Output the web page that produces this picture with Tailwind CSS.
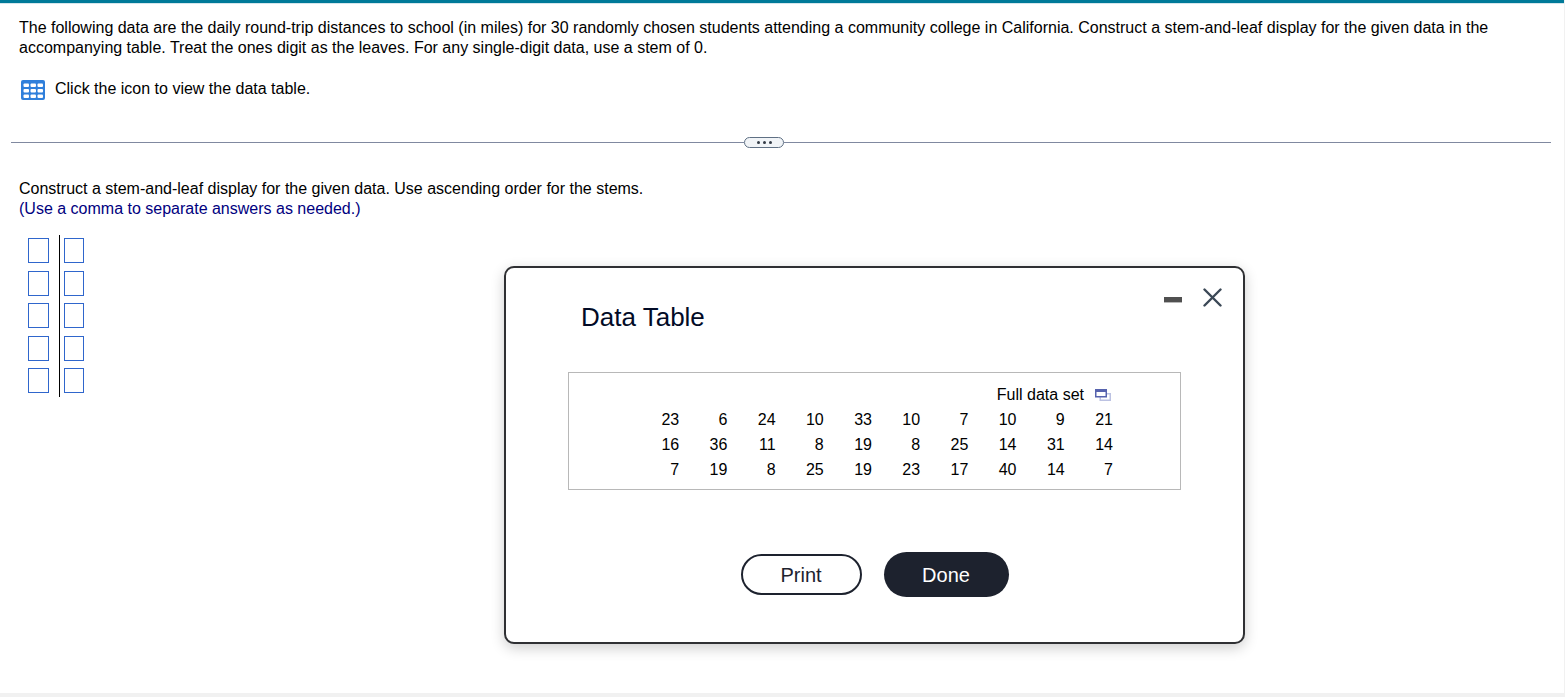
<!DOCTYPE html>
<html lang="en">
<head>
    <meta charset="UTF-8">
    <meta name="viewport" content="width=device-width, initial-scale=1.0">
    <title>Stem-and-Leaf Display</title>
    <script src="https://cdn.jsdelivr.net/npm/@tailwindcss/browser@4"></script>
</head>
<body class="relative min-h-screen flex flex-col bg-white border-r border-b-4 border-[#f1f1f1] text-base leading-5 text-black font-['Liberation_Sans',Arial,sans-serif]">
    <!-- Top bar -->
    <div class="h-1 bg-[#007a99] border-b border-[#d5e6ec]"></div>

    <main class="flex-1 pt-3.5">
        <!-- Problem statement -->
        <section class="px-[19px]">
            <p>The following data are the daily round-trip distances to school (in miles) for 30 randomly chosen students attending a community college in California. Construct a stem-and-leaf display for the given data in the accompanying table. Treat the ones digit as the leaves. For any single-digit data, use a stem of 0.</p>
            <div class="mt-[21px] pl-0.5 flex items-start gap-2.5">
                <button type="button" aria-label="View the data table" class="mt-px">
                    <svg class="block w-6 h-5" viewBox="0 0 24 20">
                        <rect width="24" height="20" rx="2" fill="#2f7fdb"/>
                        <g fill="#fff">
                            <rect x="2.5" y="3.5" width="5.5" height="3.5" rx="1"/>
                            <rect x="9.5" y="3.5" width="5.5" height="3.5" rx="1"/>
                            <rect x="16.5" y="3.5" width="5.5" height="3.5" rx="1"/>
                            <rect x="2.5" y="9" width="5.5" height="3.5" rx="1"/>
                            <rect x="9.5" y="9" width="5.5" height="3.5" rx="1"/>
                            <rect x="16.5" y="9" width="5.5" height="3.5" rx="1"/>
                            <rect x="2.5" y="14.5" width="5.5" height="3.5" rx="1"/>
                            <rect x="9.5" y="14.5" width="5.5" height="3.5" rx="1"/>
                            <rect x="16.5" y="14.5" width="5.5" height="3.5" rx="1"/>
                        </g>
                    </svg>
                </button>
                <p>Click the icon to view the data table.</p>
            </div>
        </section>

        <!-- Divider with expand handle -->
        <div class="mt-[37px] ml-[11px] mr-[13px] flex items-center">
            <div class="h-px w-[733px] bg-[#8089a0]"></div>
            <button type="button" aria-label="Expand" class="w-10 h-[11px] flex items-center justify-center gap-[3px] rounded-full border border-[#5f7084] bg-[#f1f4f7]">
                <span class="size-[3px] rounded-full bg-[#333b46]"></span>
                <span class="size-[3px] rounded-full bg-[#333b46]"></span>
                <span class="size-[3px] rounded-full bg-[#333b46]"></span>
            </button>
            <div class="h-px flex-1 bg-[#8089a0]"></div>
        </div>

        <!-- Answer area -->
        <section class="mt-[31px] px-[19px]">
            <p>Construct a stem-and-leaf display for the given data. Use ascending order for the stems.</p>
            <p class="text-[#000080]">(Use a comma to separate answers as needed.)</p>
            <div class="mt-4 ml-[9px] flex h-[162px]">
                <div class="flex flex-col justify-between pt-[3px] pb-1 pr-2.5">
                    <input type="text" aria-label="Stem 1" class="w-[21px] h-[25px] border border-[#2f66cc]">
                    <input type="text" aria-label="Stem 2" class="w-[21px] h-[25px] border border-[#2f66cc]">
                    <input type="text" aria-label="Stem 3" class="w-[21px] h-[25px] border border-[#2f66cc]">
                    <input type="text" aria-label="Stem 4" class="w-[21px] h-[25px] border border-[#2f66cc]">
                    <input type="text" aria-label="Stem 5" class="w-[21px] h-[25px] border border-[#2f66cc]">
                </div>
                <div class="flex flex-col justify-between pt-[3px] pb-1 pl-1 border-l border-black">
                    <input type="text" aria-label="Leaves 1" class="w-5 h-[25px] border border-[#2f66cc]">
                    <input type="text" aria-label="Leaves 2" class="w-5 h-[25px] border border-[#2f66cc]">
                    <input type="text" aria-label="Leaves 3" class="w-5 h-[25px] border border-[#2f66cc]">
                    <input type="text" aria-label="Leaves 4" class="w-5 h-[25px] border border-[#2f66cc]">
                    <input type="text" aria-label="Leaves 5" class="w-5 h-[25px] border border-[#2f66cc]">
                </div>
            </div>
        </section>
    </main>

    <!-- Data table dialog -->
    <div role="dialog" aria-labelledby="dialog-title" class="absolute left-[504px] top-[266px] w-[741px] px-[62px] pb-[45px] bg-white border-2 border-[#2f3033] rounded-[10px] shadow-[0_4px_14px_rgba(0,0,0,0.2)]">
        <div class="flex justify-between pl-[13px] -mr-[41px]">
            <h2 id="dialog-title" class="mt-[34px] text-[26px] leading-[30px] text-[#020b26]">Data Table</h2>
            <div class="mt-5 flex items-start gap-[21px]">
                <button type="button" aria-label="Minimize" class="pt-[9px]">
                    <span class="block w-[18px] h-1.5 bg-[#505050] border-b border-[#b8b8b8]"></span>
                </button>
                <button type="button" aria-label="Close">
                    <svg class="block size-[19px]" viewBox="0 0 19 19" fill="none" stroke="#3b4856" stroke-width="2.4" stroke-linecap="round">
                        <path d="M1.5 1.5l16 16M17.5 1.5l-16 16"/>
                    </svg>
                </button>
            </div>
        </div>

        <div class="mt-10 border border-[#b8b8b8] pt-[9px] pb-[7px] pl-[60px] pr-[67px]">
            <div class="flex items-center justify-end gap-[11px] h-[25px] pr-0.5">
                <span>Full data set</span>
                <button type="button" aria-label="Copy data set">
                    <svg class="block w-4 h-3" viewBox="0 0 16 12" fill="none">
                        <path d="M6.75 4.75h8.5v6.5h-10v-3" stroke="#bcc2e2" stroke-width="1.5"/>
                        <rect x=".75" y=".75" width="10.5" height="7" fill="#fff" stroke="#5763ae" stroke-width="1.5"/>
                        <path d="M0 1.5h12" stroke="#5763ae" stroke-width="3"/>
                    </svg>
                </button>
            </div>
            <table class="w-[482px] ml-auto table-fixed text-right">
                <tbody>
                    <tr class="h-[25px]"><td>23</td><td>6</td><td>24</td><td>10</td><td>33</td><td>10</td><td>7</td><td>10</td><td>9</td><td>21</td></tr>
                    <tr class="h-[25px]"><td>16</td><td>36</td><td>11</td><td>8</td><td>19</td><td>8</td><td>25</td><td>14</td><td>31</td><td>14</td></tr>
                    <tr class="h-[25px]"><td>7</td><td>19</td><td>8</td><td>25</td><td>19</td><td>23</td><td>17</td><td>40</td><td>14</td><td>7</td></tr>
                </tbody>
            </table>
        </div>

        <div class="mt-[62px] flex items-center justify-center gap-[22px] text-xl">
            <button type="button" class="w-[121px] h-[41px] rounded-full border-2 border-[#1d222e] text-[#1d222e]">Print</button>
            <button type="button" class="w-[125px] h-[45px] rounded-full bg-[#1d222e] text-white">Done</button>
        </div>
    </div>
</body>
</html>
